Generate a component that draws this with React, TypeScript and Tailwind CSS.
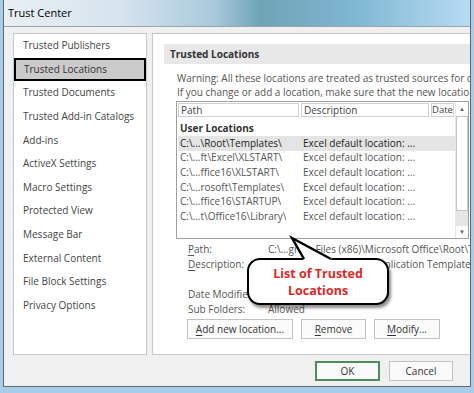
import React from "react";

const navItems = [
  "Trusted Publishers",
  "Trusted Locations",
  "Trusted Documents",
  "Trusted Add-in Catalogs",
  "Add-ins",
  "ActiveX Settings",
  "Macro Settings",
  "Protected View",
  "Message Bar",
  "External Content",
  "File Block Settings",
  "Privacy Options",
];

const locations = [
  { path: "C:\\...\\Root\\Templates\\", selected: true },
  { path: "C:\\...ft\\Excel\\XLSTART\\" },
  { path: "C:\\...ffice16\\XLSTART\\" },
  { path: "C:\\...rosoft\\Templates\\" },
  { path: "C:\\...ffice16\\STARTUP\\" },
  { path: "C:\\...t\\Office16\\Library\\" },
];

function Key({ k, rest }: { k: string; rest: string }) {
  return (
    <>
      <span className="underline underline-offset-2">{k}</span>
      {rest}
    </>
  );
}

function Callout() {
  return (
    <>
      <div className="absolute left-[247px] top-[258px] flex h-[47px] w-[142px] flex-col items-center justify-center rounded-[13px] border-[2.5px] border-black bg-white text-[12.5px] font-bold leading-[17px] text-[#e3261f] shadow-[2px_3px_3px_rgba(0,0,0,0.45)]">
        <span>List of Trusted</span>
        <span>Locations</span>
      </div>
      <svg className="absolute left-[285px] top-[234px]" width="56" height="30" viewBox="0 0 56 30">
        <polygon points="7,4 19,25 46,25" fill="#fff" />
        <polygon points="18,23 47,23 45,29 19,29" fill="#fff" />
        <path d="M19 25 L7 4 L46 25" fill="none" stroke="#000" strokeWidth="2.4" strokeLinejoin="miter" />
      </svg>
    </>
  );
}

export default function App() {
  return (
    <div
      className="relative h-[393px] w-[474px] overflow-hidden bg-[#a9cde9] text-[10px] text-[#444]"
      style={{ fontFamily: '"Open Sans", "Noto Sans", sans-serif' }}
    >
      <div className="ml-[3px] flex h-[387px] w-[468px] flex-col border-l border-r border-b border-[#5d6a75] bg-[#f0f0f0]">
        {/* title bar */}
        <div className="flex h-[26px] items-center bg-[linear-gradient(90deg,#e9eff3_0%,#d6e4ee_25%,#a9c9dc_45%,#6fa3b6_55%,#7fb6d2_75%,#b7dcf4_100%)] pl-[4px] text-[11px] text-black">
          Trust Center
        </div>
        <div className="h-[1px] bg-[#9aa4ac]" />

        <div className="flex gap-[5px] pl-[9px] pt-[6px]">
          {/* left nav */}
          <div className="h-[322px] w-[134px] border border-[#c8c8c8] bg-white">
            {navItems.map((item) =>
              item === "Trusted Locations" ? (
                <div
                  key={item}
                  className="flex h-[23.6px] items-center border-2 border-black bg-[#cbcbcb] pl-[8px] text-[#333]"
                >
                  {item}
                </div>
              ) : (
                <div key={item} className="flex h-[23.6px] items-center pl-[9px]">
                  {item}
                </div>
              )
            )}
          </div>

          {/* right pane */}
          <div className="h-[322px] min-w-0 flex-1 overflow-hidden border-y border-l border-[#c8c8c8] bg-white">
            <div className="ml-[11px] mt-[10px] flex h-[20px] items-center bg-[#e8e8e8] pl-[6px] font-bold text-[#333]">
              Trusted Locations
            </div>

            <div className="ml-[24px] mt-[7px] whitespace-nowrap leading-[14px] text-[#555]">
              <div>Warning: All these locations are treated as trusted sources for opening files.</div>
              <div>If you change or add a location, make sure that the new location is secure.</div>
            </div>

            {/* table */}
            <div className="ml-[23px] mt-[2px] flex h-[138px] w-[293px] border border-[#9aa0a6]">
              <div className="flex-1 pl-[1px] pt-[1px]">
                <div className="flex h-[14px] gap-[2px] text-[#444]">
                  <div className="flex w-[121px] items-center border border-[#d0d0d0] pl-[2px]">Path</div>
                  <div className="flex w-[128px] items-center border border-[#d0d0d0] pl-[2px]">Description</div>
                  <div className="flex w-[23px] items-center justify-center border border-[#d0d0d0] text-[9.5px]">Date</div>
                </div>
                <div className="mt-[4px] flex h-[14px] items-center pl-[2px] font-bold text-[#333]">User Locations</div>
                <div className="mt-[1px]">
                  {locations.map((row) => (
                    <div
                      key={row.path}
                      className={
                        row.selected
                          ? "flex h-[14.6px] items-center bg-[#e4e4e4] text-[#222]"
                          : "flex h-[14.6px] items-center text-[#555]"
                      }
                    >
                      <span className="w-[125px] shrink-0 whitespace-nowrap pl-[2px]">{row.path}</span>
                      <span className="whitespace-nowrap">Excel default location: ...</span>
                    </div>
                  ))}
                </div>
              </div>
              {/* scrollbar */}
              <div className="flex w-[13px] flex-col border-l border-[#e6e6e6]">
                <div className="flex h-[14px] items-center justify-center text-[6px] text-[#606060]">▲</div>
                <div className="h-[95px] border border-[#c4c4c4] bg-white" />
                <div className="flex-1 bg-[#e6e6e6]" />
                <div className="flex h-[12px] items-center justify-center text-[6px] text-[#606060]">▼</div>
              </div>
            </div>

            {/* details */}
            <div className="ml-[35px] mt-[3px] whitespace-nowrap leading-[15px] text-[#555]">
              <div className="flex">
                <span className="w-[80px] shrink-0">
                  <Key k="P" rest="ath:" />
                </span>
                <span>C:\...gram Files (x86)\Microsoft Office\Root\Templates\</span>
              </div>
              <div className="flex">
                <span className="w-[80px] shrink-0">
                  <Key k="D" rest="escription:" />
                </span>
                <span>Excel default location: Application Templates</span>
              </div>
              <div className="mt-[15px] flex">
                <span className="w-[80px] shrink-0">Date Modified:</span>
                <span />
              </div>
              <div className="flex">
                <span className="w-[80px] shrink-0">Sub Folders:</span>
                <span>Allowed</span>
              </div>
            </div>

            <div className="ml-[34px] mt-[2px] flex gap-[8px] text-[#333]">
              <button className="flex h-[20px] w-[106px] items-center justify-center border border-[#c2c2c2] bg-[#fbfbfb]">
                <Key k="A" rest="dd new location..." />
              </button>
              <button className="flex h-[20px] w-[65px] items-center justify-center border border-[#c2c2c2] bg-[#fbfbfb]">
                <Key k="R" rest="emove" />
              </button>
              <button className="flex h-[20px] w-[66px] items-center justify-center border border-[#c2c2c2] bg-[#fbfbfb]">
                <Key k="M" rest="odify..." />
              </button>
            </div>
          </div>
        </div>

        {/* footer buttons */}
        <div className="flex justify-end gap-[9px] pr-[17px] pt-[6px] text-[#333]">
          <button className="flex h-[20px] w-[65px] items-center justify-center border-2 border-[#4f8a63] bg-[#fafafa]">
            OK
          </button>
          <button className="flex h-[20px] w-[64px] items-center justify-center border border-[#c2c2c2] bg-[#fafafa]">
            Cancel
          </button>
        </div>
      </div>

      <Callout />
    </div>
  );
}
